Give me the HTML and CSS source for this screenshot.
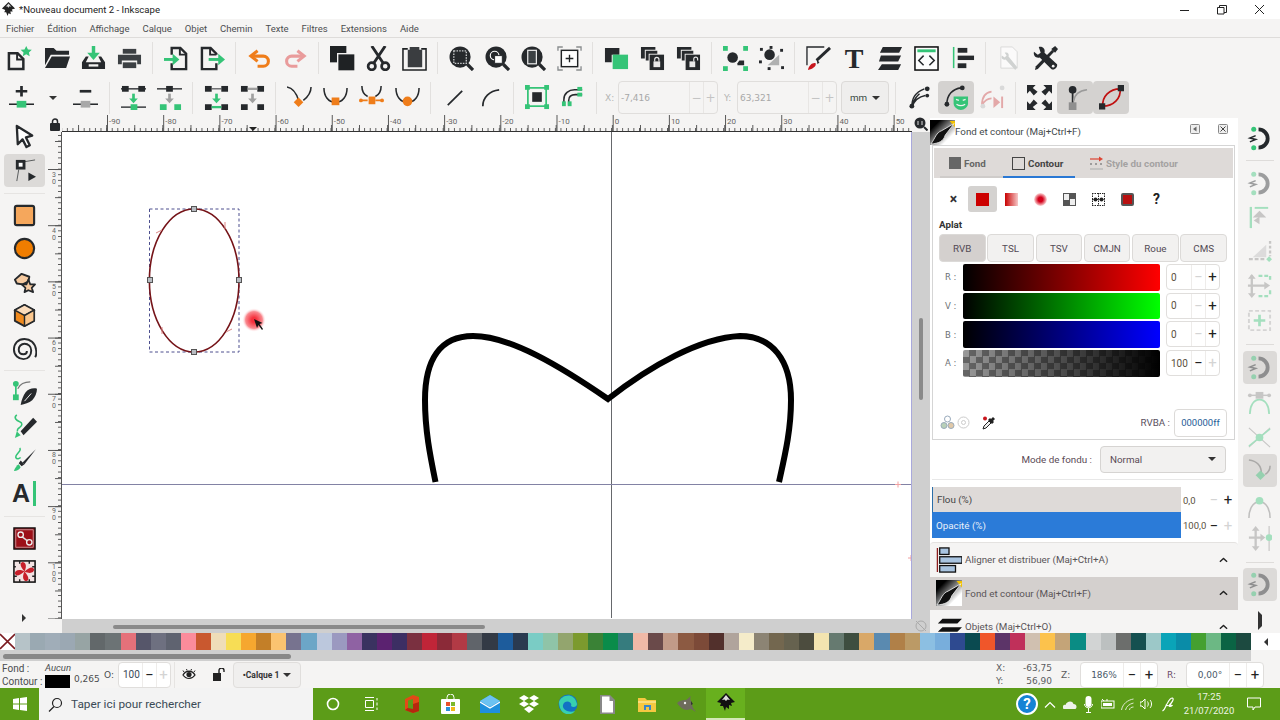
FILE: index.html
```html
<!DOCTYPE html>
<html lang="fr">
<head>
    <meta charset="UTF-8">
    <title>*Nouveau document 2 - Inkscape</title>
    <link rel="stylesheet" href="styles.css">
</head>
<body>

    <!-- Shared icons -->
    <svg class="defs" width="0" height="0">
        <defs>
            <linearGradient id="fsBg" x1="0" y1="0" x2="1" y2="1">
                <stop offset="0.2" stop-color="#000"/>
                <stop offset="0.75" stop-color="#fff"/>
            </linearGradient>
            <radialGradient id="glow">
                <stop offset="0.2" stop-color="#f5303c"/>
                <stop offset="0.7" stop-color="#f98a90"/>
                <stop offset="1" stop-color="#ffffff" stop-opacity="0"/>
            </radialGradient>
            <symbol id="magnet" viewBox="0 0 26 26">
                <path d="M12 3.5a9.5 9.5 0 0 1 0 19" fill="none" stroke="#24282b" stroke-width="4"/>
                <circle cx="7" cy="3.5" r="2.6" fill="#35c477"/>
                <circle cx="7" cy="22.5" r="2.6" fill="#35c477"/>
                <path d="M9 10 L3 12.5 L9 14 L3 16.5" fill="none" stroke="#24282b" stroke-width="1.6"/>
            </symbol>
            <symbol id="fillstroke" viewBox="0 0 28 28">
                <rect width="28" height="28" fill="url(#fsBg)"/>
                <path d="M22 1h6v7z" fill="#f2c200"/>
                <path d="M27 4 L13 12 C7 14 6 20 1 27 C10 26 15 24 17 17z" fill="#111" stroke="#fff" stroke-width=".8"/>
            </symbol>
            <symbol id="chevron" viewBox="0 0 10 6">
                <path d="M1 5 L5 1.4 L9 5" fill="none" stroke="#222" stroke-width="1.6"/>
            </symbol>
        </defs>
    </svg>

    <header class="titlebar">
        <svg class="app-logo" width="15" height="15" viewBox="0 0 16 16"><path d="M8 0 L15 7 L11.5 8 L12.5 10 L10 10 L10.5 13 L8 12 L7 15 L5.5 11 L3.5 11 L4.5 8.5 L1 7z" fill="#222"/><path d="M8 1.5 L11 5 L9 4.5 L8 6 L6.5 4.5 L5 5z" fill="#ddd"/></svg>
        <span class="title-text">*Nouveau document 2 - Inkscape</span>
        <div class="win-buttons">
            <svg width="10" height="10" viewBox="0 0 10 10"><path d="M0 5.5h9" stroke="#222" fill="none"/></svg>
            <svg width="10" height="10" viewBox="0 0 10 10"><path d="M.5 2.5h6.500v6.500H.5zM2.500 2.500V.5h7v7H7" stroke="#222" fill="none"/></svg>
            <svg width="11" height="11" viewBox="0 0 11 11"><path d="M1 1l9 9M10 1l-9 9" stroke="#222" fill="none"/></svg>
        </div>
    </header>

    <nav class="menubar">
        <span>Fichier</span><span>Édition</span><span>Affichage</span><span>Calque</span><span>Objet</span><span>Chemin</span><span>Texte</span><span>Filtres</span><span>Extensions</span><span>Aide</span>
    </nav>

    <!-- Commands toolbar -->
    <div class="toolbar commands">
        <div class="btn first"><svg class="ico" viewBox="0 0 26 26"><path d="M2 7.5h9l6 6V24H2z" fill="none" stroke="#26292c" stroke-width="2.6"/><path d="M10.5 7.5v6.5H17" fill="none" stroke="#26292c" stroke-width="2"/><polygon points="20,0 21.8,3.6 25.8,4 22.8,6.7 23.6,10.6 20,8.6 16.4,10.6 17.2,6.7 14.2,4 18.2,3.6" fill="#35c477"/></svg></div>
        <div class="btn"><svg class="ico" viewBox="0 0 26 26"><path d="M0 2h9l3 3h13v4H6L0 20z" fill="#26292c"/><path d="M7 11h19l-4 12H0z" fill="#26292c"/></svg></div>
        <div class="btn"><svg class="ico" viewBox="0 0 26 26"><path d="M13 0v8" stroke="#35c477" stroke-width="3.6" fill="none"/><path d="M6.5 7h13L13 14.5z" fill="#35c477"/><path d="M1 24v-7l4-6h3l-3 6h16l-3-6h3l4 6v7z" fill="#26292c"/><rect x="8" y="19" width="10" height="2.4" fill="#f5f4f3"/></svg></div>
        <div class="btn"><svg class="ico" viewBox="0 0 26 26"><rect x="6" y="3" width="14" height="5" fill="#3c4043"/><path d="M1 9h24v10h-4v-4H5v4H1z" fill="#3c4043"/><rect x="6" y="17" width="14" height="6" fill="#3c4043"/></svg></div>
        <div class="sep"></div>
        <div class="btn"><svg class="ico" viewBox="0 0 26 26"><path d="M8 9V2h9l6 6v16H8v-6" fill="none" stroke="#26292c" stroke-width="2.5"/><path d="M16.5 2v7H23" fill="none" stroke="#26292c" stroke-width="2"/><path d="M0 14h10" stroke="#35c477" stroke-width="3" fill="none"/><path d="M9 8l7 6-7 6z" fill="#35c477"/></svg></div>
        <div class="btn"><svg class="ico" viewBox="0 0 26 26"><path d="M17 9V8l-6-6H2v22h15v-6" fill="none" stroke="#26292c" stroke-width="2.5"/><path d="M10.5 2v7H17" fill="none" stroke="#26292c" stroke-width="2"/><path d="M9 14h11" stroke="#35c477" stroke-width="3" fill="none"/><path d="M19 8l7 6-7 6z" fill="#35c477"/></svg></div>
        <div class="sep"></div>
        <div class="btn"><svg class="ico" viewBox="0 0 26 26"><path d="M11 5 L4 10.5 L11 16" fill="none" stroke="#ef7d1a" stroke-width="3.2"/><path d="M5 10.5h12a5.2 5.2 0 0 1 0 10.5h-6" fill="none" stroke="#ef7d1a" stroke-width="3.2"/></svg></div>
        <div class="btn"><svg class="ico" viewBox="0 0 26 26"><path d="M15 5 L22 10.5 L15 16" fill="none" stroke="#e99b9b" stroke-width="3.2"/><path d="M21 10.5H9a5.2 5.2 0 0 0 0 10.500h6" fill="none" stroke="#e99b9b" stroke-width="3.2"/></svg></div>
        <div class="sep"></div>
        <div class="btn"><svg class="ico" viewBox="0 0 26 26"><rect x="0" y="0" width="17" height="17" fill="#1f2224"/><rect x="8" y="8" width="18" height="18" fill="#1f2224" stroke="#f5f4f3" stroke-width="1.4"/></svg></div>
        <div class="btn"><svg class="ico" viewBox="0 0 26 26"><circle cx="6" cy="21" r="3.8" fill="none" stroke="#26292c" stroke-width="2.8"/><circle cx="20" cy="21" r="3.8" fill="none" stroke="#26292c" stroke-width="2.8"/><path d="M8 18 L20 0M18 18 L6 0" stroke="#26292c" stroke-width="3" fill="none"/></svg></div>
        <div class="btn"><svg class="ico" viewBox="0 0 26 26"><path d="M6 3H1v22h24V3h-5" fill="none" stroke="#1f2224" stroke-width="1.6"/><path d="M8 1h10v3h3v18H6V4h2z" fill="#3a3d40"/></svg></div>
        <div class="sep"></div>
        <div class="btn"><svg class="ico" viewBox="0 0 26 26"><circle cx="11.5" cy="11.5" r="11" fill="#26292c"/><path d="M19 19l6 6" stroke="#26292c" stroke-width="3.4"/><rect x="5" y="5" width="13" height="13" fill="none" stroke="#c8cacb" stroke-width="1.4" stroke-dasharray="1.6 1.2"/></svg></div>
        <div class="btn"><svg class="ico" viewBox="0 0 26 26"><circle cx="11.5" cy="11.5" r="11" fill="#26292c"/><path d="M19 19l6 6" stroke="#26292c" stroke-width="3.4"/><circle cx="10" cy="10" r="4.5" fill="#26292c" stroke="#fff" stroke-width="1.2"/><rect x="10" y="10" width="8" height="8" fill="#fff" stroke="#26292c"/></svg></div>
        <div class="btn"><svg class="ico" viewBox="0 0 26 26"><circle cx="11.5" cy="11.5" r="11" fill="#26292c"/><path d="M19 19l6 6" stroke="#26292c" stroke-width="3.4"/><rect x="7" y="4.5" width="9" height="14" fill="#3b4043" stroke="#e8e8e8" stroke-width="1.3"/></svg></div>
        <div class="btn"><svg class="ico" viewBox="0 0 26 26"><path d="M1 5V1h5M20 1h5v4M25 21v4h-5M6 25H1v-4" fill="none" stroke="#8a8d8f" stroke-width="1.4"/><rect x="4.5" y="4.5" width="17" height="17" fill="#fdfdfd" stroke="#1f2224" stroke-width="1.5"/><path d="M13 9v8M9 13h8" stroke="#1f2224" stroke-width="1.4"/></svg></div>
        <div class="sep"></div>
        <div class="btn"><svg class="ico" viewBox="0 0 26 26"><path d="M1 2h15v7H8v8H1z" fill="#26292c"/><rect x="9" y="9" width="16" height="15" fill="#35c477"/></svg></div>
        <div class="btn"><svg class="ico" viewBox="0 0 26 26"><path d="M1 1h15v3H5v9H1z" fill="#26292c"/><path d="M6 5h12v3H9v7H6z" fill="#26292c"/><rect x="10" y="9" width="15" height="16" fill="#26292c"/><rect x="14" y="16" width="7" height="6" fill="#e9e9e9"/><path d="M15.3 16v-2a2.2 2.2 0 0 1 4.4 0v2" fill="none" stroke="#e9e9e9" stroke-width="1.2"/></svg></div>
        <div class="btn"><svg class="ico" viewBox="0 0 26 26"><path d="M1 1h15v3H5v9H1z" fill="#26292c"/><path d="M6 5h12v3H9v7H6z" fill="#26292c"/><rect x="10" y="9" width="15" height="16" fill="#26292c"/><rect x="14" y="16" width="6" height="6" fill="#e9e9e9"/><path d="M18.5 16v-2.5a2 2 0 0 1 4 0v1.5" fill="none" stroke="#e9e9e9" stroke-width="1.2"/></svg></div>
        <div class="sep"></div>
        <div class="btn"><svg class="ico" viewBox="0 0 26 26"><g fill="#35c477"><rect x="0" y="0" width="5" height="5"/><rect x="21" y="0" width="5" height="5"/><rect x="0" y="21" width="5" height="5"/><rect x="21" y="21" width="5" height="5"/></g><circle cx="10" cy="12" r="5.5" fill="#26292c"/><path d="M17 15h5v5h-7v-2z" fill="#26292c"/></svg></div>
        <div class="btn"><svg class="ico" viewBox="0 0 26 26"><g fill="#26292c"><rect x="1" y="2" width="3" height="3"/><rect x="11" y="0" width="3" height="3"/><rect x="22" y="3" width="3" height="3"/><rect x="0" y="15" width="3" height="3"/><rect x="23" y="21" width="3" height="3"/><rect x="9" y="22" width="3" height="3"/></g><circle cx="11" cy="9" r="5.5" fill="#26292c"/><path d="M21 9v11H9z" fill="#b0b1b1"/></svg></div>
        <div class="sep"></div>
        <div class="btn"><svg class="ico" viewBox="0 0 26 26"><path d="M19 1H1v19" fill="none" stroke="#26292c" stroke-width="1.4"/><path d="M25 2 L11 15" stroke="#26292c" stroke-width="3"/><path d="M11 14l3 3-2 2z" fill="#26292c"/><path d="M2 25c1-5 5-8 8-7 1 3-3 6-8 7z" fill="#c8161d"/></svg></div>
        <div class="btn"><span class="glyph-t">T</span></div>
        <div class="btn"><svg class="ico" viewBox="0 0 26 26"><path d="M5 1h20l-3 6H2zM3 10h21l-3 6H1zM4 19h20l-3 6H0z" fill="#26292c"/></svg></div>
        <div class="btn"><svg class="ico" viewBox="0 0 26 26"><rect x="1" y="1" width="24" height="24" fill="#fdfdfd" stroke="#111" stroke-width="1.6"/><rect x="3.5" y="3.5" width="19" height="3" fill="#35c477"/><path d="M10 10l-5 5 5 5M16 10l5 5-5 5" fill="none" stroke="#26292c" stroke-width="1.6"/></svg></div>
        <div class="btn"><svg class="ico" viewBox="0 0 26 26"><rect x="3" y="1" width="1.6" height="22" fill="#35c477"/><rect x="8" y="2" width="10" height="5" fill="#26292c"/><rect x="8" y="10" width="17" height="4.6" fill="#26292c"/><rect x="8" y="18" width="9" height="5" fill="#26292c"/></svg></div>
        <div class="sep"></div>
        <div class="btn faded"><svg class="ico" viewBox="0 0 26 26"><path d="M4 1h12l5 5v17H4z" fill="#fff" stroke="#c9c9c9"/><path d="M8 7c3-1 5 1 4 4l9 11-2 3-10-11c-3 1-5-1-4-4l3 2 2-2z" fill="#b8bcbc"/></svg></div>
        <div class="btn"><svg class="ico" viewBox="0 0 26 26"><path d="M2 25l3-1 17-18-2-2L3 21z" fill="#26292c"/><path d="M19 3l4-3 3 3-3 4z" fill="#26292c"/><path d="M6 1c4-1 7 2 6 6l13 12c1 3-3 7-6 5L7 12c-4 1-7-2-6-6l4 3 3-2z" fill="#26292c"/><circle cx="21" cy="21" r="1.400" fill="#f5f4f3"/></svg></div>
    </div>

    <!-- Node tool controls -->
    <div class="toolbar controls">
        <div class="btn"><svg class="ico" viewBox="0 0 26 26"><path d="M13 1v11M7 6.5h12" stroke="#26292c" stroke-width="2.8" fill="none"/><path d="M0 20h26" stroke="#26292c" stroke-width="1.6"/><rect x="8" y="16.5" width="10" height="7" fill="#35c477"/></svg></div>
        <div class="btn narrow"><span class="caret"></span></div>
        <div class="btn"><svg class="ico" viewBox="0 0 26 26"><path d="M7 6.5h12" stroke="#26292c" stroke-width="2.8" fill="none"/><path d="M0 20h26" stroke="#26292c" stroke-width="1.6"/><rect x="8" y="16.5" width="10" height="7" fill="#a8a8a8"/></svg></div>
        <div class="sep wide"></div>
        <div class="btn"><svg class="ico" viewBox="0 0 26 26"><path d="M0 4h26" stroke="#26292c" stroke-width="1.4"/><rect x="1" y="1" width="7" height="6" fill="#26292c"/><rect x="18" y="1" width="7" height="6" fill="#26292c"/><path d="M13 9v7" stroke="#35c477" stroke-width="2.8"/><path d="M8.5 14h9L13 19z" fill="#35c477"/><path d="M0 23h26" stroke="#26292c" stroke-width="1.4"/><rect x="10" y="20" width="7" height="6" fill="#35c477"/></svg></div>
        <div class="btn"><svg class="ico" viewBox="0 0 26 26"><path d="M0 4h26" stroke="#26292c" stroke-width="1.4"/><rect x="9.500" y="1" width="7" height="6" fill="#26292c"/><path d="M13 9v7" stroke="#a0a0a0" stroke-width="2.8"/><path d="M8.500 14h9L13 19z" fill="#a0a0a0"/><rect x="3" y="20" width="7" height="6" fill="#35c477"/><rect x="18" y="20" width="7" height="6" fill="#35c477"/></svg></div>
        <div class="sep"></div>
        <div class="btn"><svg class="ico" viewBox="0 0 26 26"><rect x="1" y="1" width="7" height="6" fill="#26292c"/><rect x="18" y="1" width="7" height="6" fill="#26292c"/><path d="M8 4h10" stroke="#26292c"/><path d="M13 9v7" stroke="#35c477" stroke-width="2.800"/><path d="M8.500 14h9L13 19z" fill="#35c477"/><rect x="1" y="20" width="7" height="6" fill="#26292c"/><rect x="18" y="20" width="7" height="6" fill="#26292c"/><path d="M8 23h10" stroke="#35c477" stroke-width="2.400"/></svg></div>
        <div class="btn"><svg class="ico" viewBox="0 0 26 26"><rect x="1" y="1" width="7" height="6" fill="#26292c"/><rect x="18" y="1" width="7" height="6" fill="#26292c"/><path d="M8 4h10" stroke="#a0a0a0" stroke-width="2.400"/><path d="M13 9v7" stroke="#a0a0a0" stroke-width="2.800"/><path d="M8.500 14h9L13 19z" fill="#a0a0a0"/><rect x="1" y="20" width="7" height="6" fill="#26292c"/><rect x="18" y="20" width="7" height="6" fill="#26292c"/></svg></div>
        <div class="sep"></div>
        <div class="btn"><svg class="ico" viewBox="0 0 26 26"><path d="M0 2c6 1 10 7 12 14M25 2c0 5-3 10-8 14" fill="none" stroke="#26292c" stroke-width="1.600"/><path d="M12 13l5 5-5 5-5-5z" fill="#ef7d1a"/></svg></div>
        <div class="btn"><svg class="ico" viewBox="0 0 26 26"><path d="M1 3c0 8 4 15 12 15s12-7 12-15" fill="none" stroke="#26292c" stroke-width="1.600"/><rect x="9" y="13" width="8" height="8" fill="#ef7d1a"/></svg></div>
        <div class="btn"><svg class="ico" viewBox="0 0 26 26"><path d="M3 1c0 5 2 9 6 11M23 1c0 5-2 9-6 11" fill="none" stroke="#26292c" stroke-width="1.600"/><rect x="10" y="12" width="7" height="8" fill="#ef7d1a"/><path d="M1 16h8M17 16h8" stroke="#ef7d1a" stroke-width="1.600"/><circle cx="2" cy="16" r="2" fill="#ef7d1a"/><circle cx="24" cy="16" r="2" fill="#ef7d1a"/></svg></div>
        <div class="btn"><svg class="ico" viewBox="0 0 26 26"><path d="M1 3c0 8 4 15 12 15s12-7 12-15" fill="none" stroke="#26292c" stroke-width="1.600"/><circle cx="13" cy="17" r="5" fill="#ef7d1a"/></svg></div>
        <div class="sep"></div>
        <div class="btn"><svg class="ico" viewBox="0 0 26 26"><path d="M6 21 L21 6" stroke="#26292c" stroke-width="1.800"/></svg></div>
        <div class="btn"><svg class="ico" viewBox="0 0 26 26"><path d="M5 22c0-9 7-16 17-17" fill="none" stroke="#26292c" stroke-width="1.800"/></svg></div>
        <div class="sep"></div>
        <div class="btn"><svg class="ico" viewBox="0 0 26 26"><rect x="3" y="3" width="19" height="19" fill="none" stroke="#35c477" stroke-width="1.800"/><g fill="#35c477"><rect x="0" y="0" width="5" height="5"/><rect x="20" y="0" width="5" height="5"/><rect x="0" y="20" width="5" height="5"/><rect x="20" y="20" width="5" height="5"/></g><rect x="7.500" y="7.500" width="10" height="10" fill="#26292c"/></svg></div>
        <div class="btn"><svg class="ico" viewBox="0 0 26 26"><path d="M3 21v-6c0-6 5-10 11-10h8M8 21v-5c0-4 3-6 7-6h7" fill="none" stroke="#26292c" stroke-width="1.600"/><g fill="#35c477"><rect x="1" y="17" width="4" height="5"/><rect x="7" y="17" width="4" height="5"/><rect x="17" y="2" width="5" height="4"/><rect x="17" y="8" width="5" height="4"/></g></svg></div>
        <div class="sep"></div>
        <label class="field-label">X:</label>
        <div class="coord"><span>-7,416</span><i>−</i><i>+</i></div>
        <label class="field-label">Y:</label>
        <div class="coord"><span>63,321</span><i>−</i><i>+</i></div>
        <div class="unit">mm<span class="caret"></span></div>
        <div class="sep end"></div>
        <div class="btn"><svg class="ico" viewBox="0 0 26 26"><path d="M4 23c0-9 3-15 13-19M4 23c3-8 8-11 14-12M4 23c2-9 6-12 8-14" fill="none" stroke="#26292c" stroke-width="1.500"/><circle cx="4" cy="22" r="2.500" fill="#26292c"/><circle cx="20" cy="4" r="2.500" fill="#26292c"/><circle cx="20" cy="11" r="2" fill="#26292c"/></svg></div>
        <div class="btn on"><svg class="ico" viewBox="0 0 26 26"><path d="M3 20C3 10 9 4 18 3" fill="none" stroke="#26292c" stroke-width="1.600"/><circle cx="3" cy="20" r="2.500" fill="#26292c"/><circle cx="19" cy="3" r="2.500" fill="#26292c"/><path d="M10 12h15v7c0 4-4 7-7.500 7S10 23 10 19z" fill="#35c477"/><path d="M12.500 15l3 1M22.500 15l-3 1M13 20c3 2 6 2 9 0" stroke="#f0f0f0" stroke-width="1.400" fill="none"/></svg></div>
        <div class="btn faded-red"><svg class="ico" viewBox="0 0 26 26"><path d="M2 21c0-7 3-13 10-14M2 21c3-5 6-7 10-7" fill="none" stroke="#e3a8a8" stroke-width="1.800"/><circle cx="3" cy="22" r="2.500" fill="#d9d9d9"/><circle cx="23" cy="3" r="2.500" fill="#d9d9d9"/><path d="M14 12l7 6-7 6z" fill="#e3a8a8"/><rect x="22" y="12" width="2" height="12" fill="#e3a8a8"/></svg></div>
        <div class="sep"></div>
        <div class="btn"><svg class="ico" viewBox="0 0 26 26"><g fill="#26292c"><path d="M0 0h9L6 3l5 4-4 4-4-5-3 3z"/><path d="M26 0h-9l3 3-5 4 4 4 4-5 3 3z"/><path d="M0 26h9l-3-3 5-4-4-4-4 5-3-3z"/><path d="M26 26h-9l3-3-5-4 4-4 4 5 3-3z"/></g></svg></div>
        <div class="btn on"><svg class="ico" viewBox="0 0 26 26"><path d="M10 4v15" stroke="#26292c" stroke-width="1.800"/><circle cx="10" cy="5" r="4" fill="#26292c"/><rect x="6" y="18" width="8" height="8" fill="#8f8f8f"/><path d="M11 17c1-8 6-11 14-12" fill="none" stroke="#9a9a9a" stroke-width="1.500"/></svg></div>
        <div class="btn on"><svg class="ico" viewBox="0 0 26 26"><path d="M4 22C3 12 11 4 22 4M4 22c11 0 19-8 18-18" fill="none" stroke="#c01010" stroke-width="1.800"/><rect x="0" y="19" width="6.500" height="6.500" fill="#26292c"/><rect x="19.500" y="0" width="6.500" height="6.500" fill="#26292c"/></svg></div>
    </div>

    <main class="workspace">
        <!-- Left tool column -->
        <aside class="toolbox">
            <div class="tool"><svg class="ico" viewBox="0 0 26 26"><path d="M5 2 L21 12 L14.500 14 L18.500 22 L15 24 L11 16 L6 21z" fill="#fff" stroke="#26292c" stroke-width="2.400" stroke-linejoin="round"/></svg></div>
            <div class="tool on"><svg class="ico" viewBox="0 0 26 26"><path d="M5 24 L7 12M12 4l12-2" stroke="#55585a" fill="none"/><rect x="5.500" y="3.500" width="7" height="7" fill="#fff" stroke="#26292c" stroke-width="3"/><path d="M17 15l8 4.500-8 4.500z" fill="#26292c"/></svg></div>
            <div class="tool-sep"></div>
            <div class="tool"><svg class="ico" viewBox="0 0 26 26"><rect x="3" y="3" width="20" height="20" rx="2" fill="#f5a75c" stroke="#26292c" stroke-width="2.200"/></svg></div>
            <div class="tool"><svg class="ico" viewBox="0 0 26 26"><circle cx="13" cy="13" r="10" fill="#f07d00" stroke="#26292c" stroke-width="2.200"/></svg></div>
            <div class="tool"><svg class="ico" viewBox="0 0 26 26"><path d="M3 10l7-6 8 3-1 5-6 3-6-1z" fill="#f6caa0" stroke="#26292c" stroke-width="2" stroke-linejoin="round"/><polygon points="17,10 19,15 24,15 20.500,18.500 22,23 17,21 13,23 14,18.500 10,15 15,15" fill="#f6caa0" stroke="#26292c" stroke-width="1.800" stroke-linejoin="round"/></svg></div>
            <div class="tool"><svg class="ico" viewBox="0 0 26 26"><path d="M13 2l10 5.500v11L13 24 3 18.500v-11z" fill="#f08a1e" stroke="#26292c" stroke-width="2" stroke-linejoin="round"/><path d="M13 2l10 5.500L13 13 3 7.500z" fill="#fbdcbc" stroke="#26292c" stroke-width="1.500"/><path d="M13 13l10-5.500v11L13 24z" fill="#fbc78e" stroke="#26292c" stroke-width="1.500"/></svg></div>
            <div class="tool"><svg class="ico" viewBox="0 0 26 26"><path d="M24 21c1.500-2 1.500-5 1-8C24 6 19 2 13 2 6 2 2 7 2 13c0 6 5 10 10 10 5 0 8-4 8-9 0-4-3-7-7-7-3.500 0-6 3-6 6 0 3 2 5 5 5 2 0 3.500-1.500 3.500-3.500" fill="none" stroke="#26292c" stroke-width="2"/></svg></div>
            <div class="tool-sep tall"></div>
            <div class="tool"><svg class="ico" viewBox="0 0 26 26"><path d="M4 5v13" stroke="#35c477" stroke-width="1.800"/><circle cx="4" cy="4" r="3" fill="#35c477"/><rect x="1" y="15" width="6" height="6" fill="#35c477"/><path d="M6 9c2-4 6-7 13-7" fill="none" stroke="#777" stroke-width="1.200"/><path d="M26 9c-4-1-9 0-12 4-2 3-4 7-5 13 4-1 9-2 12-5 3-3 5-8 5-12z" fill="#26292c"/><path d="M20 14l-7 8" stroke="#f5f4f3"/></svg></div>
            <div class="tool"><svg class="ico" viewBox="0 0 26 26"><path d="M5 1c-4 3 0 6 3 7s3 4 0 6c-2 1-3 3-2 4" fill="none" stroke="#35c477" stroke-width="1.600"/><path d="M3 25l2-7 4 4z" fill="#35c477"/><path d="M9 18L22 4l4 4-14 14z" fill="#26292c"/></svg></div>
            <div class="tool"><svg class="ico" viewBox="0 0 26 26"><path d="M8 1c3 3-5 6-4 10 1 2 4 1 5 0" fill="none" stroke="#35c477" stroke-width="1.600"/><path d="M25 2L11 16l2 2z" fill="#26292c"/><path d="M9 14l4 4-3 2-3-3z" fill="#26292c"/><path d="M2 25c1-3 3-6 5-7l2 3c-1 2-4 4-7 4z" fill="#35c477"/></svg></div>
            <div class="tool"><span class="glyph-a">A</span><span class="text-cursor"></span></div>
            <div class="tool-sep"></div>
            <div class="tool"><svg class="ico" viewBox="0 0 26 26"><rect x="2" y="2" width="22" height="22" fill="#9c0f18" stroke="#111" stroke-width="1.400"/><rect x="4" y="4" width="18" height="18" fill="none" stroke="#ddd" stroke-width=".6"/><path d="M9 10l9 7" stroke="#ddd" stroke-width="1.400"/><circle cx="9" cy="9" r="2.800" fill="#9c0f18" stroke="#eee" stroke-width="1.400"/><circle cx="18" cy="17" r="2.800" fill="#9c0f18" stroke="#eee" stroke-width="1.400"/></svg></div>
            <div class="tool"><svg class="ico" viewBox="0 0 26 26"><rect x="2" y="2" width="22" height="22" fill="#f2e3e3" stroke="#111" stroke-width="1.600"/><path d="M13 13C8 7 8 4 11 3c3 0 5 4 2 10zM13 13c6-5 9-5 10-2 0 3-4 5-10 2zM13 13c5 6 5 9 2 10-3 0-5-4-2-10zM13 13c-6 5-9 5-10 2 0-3 4-5 10-2z" fill="#c71f2a"/><path d="M2 8h2M8 2v3M24 8h-3M18 2v3M2 18h3M8 24v-3M24 18h-3M18 24v-3" stroke="#222" stroke-width="1.500"/></svg></div>
            <div class="tool more"><span class="arrow-right"></span></div>
        </aside>

        <!-- Rulers, canvas, scrollbars -->
        <section class="editor">
            <div class="ruler-row">
                <div class="ruler-corner"><svg width="10" height="13" viewBox="0 0 10 13"><rect y="5" width="10" height="8" rx="1" fill="#26292c"/><path d="M2.500 5.500V3.500a2.500 2.500 0 0 1 5 0v2" fill="none" stroke="#26292c" stroke-width="1.500"/></svg></div>
                <div class="ruler-top">
                    <span>-90</span><span>-80</span><span>-70</span><span>-60</span><span>-50</span><span>-40</span><span>-30</span><span>-20</span><span>-10</span><span>0</span><span>10</span><span>20</span><span>30</span><span>40</span><span>50</span>
                    <i class="ruler-mark"></i>
                </div>
                <div class="zoom-corner"><svg width="14" height="14" viewBox="0 0 14 14"><circle cx="6" cy="6" r="5.500" fill="#26292c"/><path d="M10 10l3.500 3.500" stroke="#26292c" stroke-width="2"/><path d="M4 4v4M8 4v4" stroke="#ddd"/></svg></div>
            </div>
            <div class="canvas-row">
                <div class="ruler-left">
                    <span>3<br>0</span><span>4<br>0</span><span>5<br>0</span><span>6<br>0</span><span>7<br>0</span><span>8<br>0</span><span>9<br>0</span><span>1<br>0<br>0</span>
                </div>
                <div class="canvas">
                    <svg class="drawing" width="849" height="486" viewBox="62 132 849 486">
                        <path d="M611.500 132V618" stroke="#66686c" fill="none"/>
                        <path d="M62 484.500H911" stroke="#8282a4" fill="none"/>
                        <path d="M895 484.500h6M898 481.500v6M908 558h6M911 555v6" stroke="#f0a0a0" fill="none"/>
                        <path d="M435.500 482C430 455 425 430 425 400C425 360 440 336 473 336C510 336 560 366 608 399C650 366 700 338 740 336C772 336 791 360 791 400C791 430 785 455 779 482" fill="none" stroke="#000" stroke-width="6"/>
                        <rect x="149.500" y="209" width="89.500" height="143" fill="none" stroke="#4c4f8e" stroke-dasharray="3 2.500"/>
                        <ellipse cx="194.200" cy="280.500" rx="44.800" ry="71.500" fill="none" stroke="#751318" stroke-width="1.600"/>
                        <path d="M156 233l6-3M225 222v7M162 334v-7M226 332l6-3" stroke="#d88" fill="none"/>
                        <g fill="#b9bcc2" stroke="#555">
                            <rect x="191.500" y="206.500" width="5" height="5"/>
                            <rect x="147.500" y="277.500" width="5" height="5"/>
                            <rect x="236.500" y="277.500" width="5" height="5"/>
                            <rect x="191.500" y="349.500" width="5" height="5"/>
                        </g>
                        <circle cx="254" cy="320" r="12" fill="url(#glow)"/>
                        <path d="M254 319l3 9 1.500-3 3.500 5 1-1-3.500-5 3-1z" fill="#111"/>
                    </svg>
                </div>
                <div class="vscroll"><span class="vthumb"></span></div>
            </div>
            <div class="hscroll-row">
                <div class="hscroll"><span class="hthumb"></span></div>
                <div class="cms-corner"><svg width="12" height="12" viewBox="0 0 12 12"><circle cx="6" cy="6" r="5" fill="none" stroke="#aaa"/><path d="M1 1l10 10" stroke="#aaa"/></svg></div>
            </div>
        </section>

        <!-- Dock -->
        <aside class="dock">
            <div class="dock-head">
                <svg class="dock-icon" viewBox="0 0 28 28"><use href="#fillstroke"/></svg>
                <span class="dock-title">Fond et contour (Maj+Ctrl+F)</span>
                <svg class="mini first-mini" width="10" height="10" viewBox="0 0 10 10"><rect x=".5" y=".5" width="9" height="9" rx="1" fill="#eee" stroke="#888"/><path d="M6.500 2.500v5L3 5z" fill="#666"/></svg>
                <svg class="mini" width="10" height="10" viewBox="0 0 10 10"><rect x=".5" y=".5" width="9" height="9" rx="1" fill="#eee" stroke="#888"/><path d="M2.500 2.500l5 5M7.500 2.500l-5 5" stroke="#444"/></svg>
            </div>
            <div class="fs-panel">
                <div class="fs-tabs">
                    <div class="fs-tab tab-fill"><span class="sq-solid"></span>Fond</div>
                    <div class="fs-tab tab-stroke"><span class="sq-line"></span>Contour</div>
                    <div class="fs-tab tab-style"><svg width="13" height="14" viewBox="0 0 13 14"><path d="M0 3h10" stroke="#d43" stroke-width="1.200"/><path d="M9 0.500l4 2.500-4 2.500z" fill="#d43"/><path d="M0 8h2M5 8h2M10 8h2" stroke="#888" stroke-width="1.400"/><path d="M0 13h13" stroke="#bbb" stroke-width="1.500"/></svg>Style du contour</div>
                </div>
                <div class="paint-modes">
                    <div class="mode">×</div>
                    <div class="mode on"><span class="pm pm-flat"></span></div>
                    <div class="mode"><span class="pm pm-linear"></span></div>
                    <div class="mode"><span class="pm pm-radial"></span></div>
                    <div class="mode"><span class="pm pm-pattern"></span></div>
                    <div class="mode"><svg width="13" height="13" viewBox="0 0 13 13"><path d="M0 .5h13M0 6.500h13M0 12.500h13M.5 0v13M6.500 0v13M12.500 0v13" stroke="#222" stroke-dasharray="1.500 1"/><circle cx="3.500" cy="6.500" r="2" fill="#222"/><circle cx="9.500" cy="6.500" r="2" fill="#222"/></svg></div>
                    <div class="mode"><span class="pm pm-swatch"></span></div>
                    <div class="mode mode-help">?</div>
                </div>
                <div class="aplat">Aplat</div>
                <div class="color-tabs">
                    <span class="on">RVB</span><span>TSL</span><span>TSV</span><span>CMJN</span><span>Roue</span><span>CMS</span>
                </div>
                <div class="sliders">
                    <label>R :</label><div class="bar bar-r"></div>
                    <div class="spin"><b>0</b><i class="dim">−</i><i>+</i></div>
                    <label>V :</label><div class="bar bar-g"></div>
                    <div class="spin"><b>0</b><i class="dim">−</i><i>+</i></div>
                    <label>B :</label><div class="bar bar-b"></div>
                    <div class="spin"><b>0</b><i class="dim">−</i><i>+</i></div>
                    <label>A :</label><div class="bar bar-a"></div>
                    <div class="spin"><b>100</b><i>−</i><i class="dim">+</i></div>
                </div>
                <div class="rgba-row">
                    <svg width="15" height="15" viewBox="0 0 15 15"><circle cx="7.500" cy="4" r="3" fill="none" stroke="#9ab"/><circle cx="4" cy="10.500" r="3" fill="#b8d0b8" stroke="#9ab"/><circle cx="11" cy="10.500" r="3" fill="#e0c8a8" stroke="#9ab"/></svg>
                    <svg width="13" height="13" viewBox="0 0 13 13"><circle cx="6.500" cy="6.500" r="5.500" fill="none" stroke="#ccc"/><circle cx="6.500" cy="6.500" r="2" fill="none" stroke="#ccc"/></svg>
                    <svg class="picker" width="13" height="14" viewBox="0 0 13 14"><circle cx="3" cy="2.500" r="2" fill="#c8161d"/><path d="M1 13l1-3 5-5 2 2-5 5z" fill="#eee" stroke="#222"/><path d="M6 4l2-2 1 1 2-2 2 2-2 2 1 1-2 2z" fill="#222"/></svg>
                    <span class="rgba-label">RVBA :</span>
                    <span class="rgba-input">000000ff</span>
                </div>
            </div>
            <div class="blend-row">
                <span>Mode de fondu :</span>
                <div class="select">Normal<span class="caret"></span></div>
            </div>
            <div class="scale-row flou"><div class="scale"><span>Flou (%)</span></div><b>0,0</b><i class="dim">−</i><i>+</i></div>
            <div class="scale-row opac"><div class="scale"><span>Opacité (%)</span></div><b>100,0</b><i>−</i><i class="dim">+</i></div>
            <div class="dock-items">
                <div class="dock-item">
                    <svg class="item-icon" viewBox="0 0 28 28"><path d="M1.500 1v26" stroke="#8c1c1c" stroke-width="1.400"/><rect x="4" y="1" width="10" height="7" fill="#a9c4e0" stroke="#111" stroke-width="1.400"/><rect x="4" y="10.500" width="24" height="7" fill="#a9c4e0" stroke="#111" stroke-width="1.400"/><rect x="4" y="20" width="17" height="7" fill="#a9c4e0" stroke="#111" stroke-width="1.400"/></svg>
                    <span>Aligner et distribuer (Maj+Ctrl+A)</span>
                    <svg class="chev" viewBox="0 0 10 6"><use href="#chevron"/></svg>
                </div>
                <div class="dock-item on">
                    <svg class="item-icon" viewBox="0 0 28 28"><use href="#fillstroke"/></svg>
                    <span>Fond et contour (Maj+Ctrl+F)</span>
                    <svg class="chev" viewBox="0 0 10 6"><use href="#chevron"/></svg>
                </div>
                <div class="dock-item last">
                    <svg class="item-icon" viewBox="0 0 28 28"><path d="M7 3h21l-5 5H2zM7 12h21l-5 5H2z" fill="#111"/></svg>
                    <span>Objets (Maj+Ctrl+O)</span>
                    <svg class="chev" viewBox="0 0 10 6"><use href="#chevron"/></svg>
                </div>
            </div>
        </aside>

        <!-- Snap bar -->
        <aside class="snapbar">
            <div class="snap main"><svg width="26" height="26"><use href="#magnet"/></svg></div>
            <div class="snap-sep first"></div>
            <div class="snap group faint"><svg width="26" height="26"><use href="#magnet"/></svg></div>
            <div class="snap group faint"><svg width="26" height="26" viewBox="0 0 26 26"><path d="M4 2v22" stroke="#35c477" stroke-width="2.400"/><path d="M7 16l6-4v8z" fill="#888"/><path d="M13 6l7 7H6z" fill="#888"/><path d="M8 3h14" stroke="#35c477" stroke-width="2"/></svg></div>
            <div class="snap group faint"><svg width="26" height="26" viewBox="0 0 26 26"><path d="M24 2v16" stroke="#888" stroke-width="2.400" stroke-dasharray="3 2"/><path d="M2 21h18" stroke="#888" stroke-width="2.400" stroke-dasharray="4 2"/><path d="M20 6L6 19h14z" fill="#bbb"/><path d="M23 18l3 3-3 3-3-3z" fill="#35c477"/></svg></div>
            <div class="snap group faint"><svg width="26" height="26" viewBox="0 0 26 26"><path d="M5 1v22M1 12h18" stroke="#888" stroke-width="2.400"/><path d="M5 0l4 5H1zM5 25l4-5H1zM24 12l-6 4V8z" fill="#888"/><path d="M12 2h12M12 23h12M24 2v5M24 17v6" stroke="#35c477" stroke-width="2.400" stroke-dasharray="4 2"/></svg></div>
            <div class="snap group faint"><svg width="26" height="26" viewBox="0 0 26 26"><rect x="2" y="3" width="22" height="20" fill="none" stroke="#aaa" stroke-width="2" stroke-dasharray="4 2.500"/><path d="M13 7v12M7 13h12" stroke="#35c477" stroke-width="2.800"/></svg></div>
            <div class="snap-sep second"></div>
            <div class="snap on faint"><svg width="26" height="26"><use href="#magnet"/></svg></div>
            <div class="snap faint after-on"><svg width="26" height="26" viewBox="0 0 26 26"><path d="M3 24c0-9 4-15 10-15s10 6 10 15" fill="none" stroke="#35c477" stroke-width="1.800"/><rect x="9" y="1" width="8" height="7" fill="#888"/><path d="M2 4.500h22" stroke="#888" stroke-width="1.500"/><circle cx="3" cy="4.500" r="2" fill="#888"/><circle cx="23" cy="4.500" r="2" fill="#888"/></svg></div>
            <div class="snap faint"><svg width="26" height="26" viewBox="0 0 26 26"><path d="M2 23L24 3M2 3l22 20" stroke="#888" stroke-width="1.200"/><path d="M2 22L24 4" stroke="#35c477" stroke-width="1.500"/><circle cx="13" cy="13" r="4" fill="#35c477"/></svg></div>
            <div class="snap on faint"><svg width="26" height="26" viewBox="0 0 26 26"><path d="M2 2c8 1 13 6 13 14M24 8c0 4-2 7-5 9" fill="none" stroke="#666" stroke-width="1.600"/><path d="M14 13l5 5-5 5-5-5z" fill="#35c477"/></svg></div>
            <div class="snap faint after-on wider"><svg width="26" height="26" viewBox="0 0 26 26"><path d="M2 24c0-9 4-17 11-17s11 8 11 17" fill="none" stroke="#777" stroke-width="1.600"/><circle cx="13" cy="6" r="4" fill="#35c477"/></svg></div>
            <div class="snap faint tight"><svg width="26" height="26" viewBox="0 0 26 26"><path d="M9 2v22M2 12h14" stroke="#888" stroke-width="2.400"/><path d="M9 0l4 5H5zM9 26l4-5H5zM19 12l-5 4V8z" fill="#888"/><path d="M23 0v26" stroke="#888" stroke-width="1.200"/><circle cx="23" cy="12" r="3.500" fill="#35c477"/></svg></div>
            <div class="snap-sep third"></div>
            <div class="snap on faint"><svg width="26" height="26"><use href="#magnet"/></svg></div>
            <div class="snap-more"><span class="arrow-right"></span></div>
        </aside>
    </main>

    <div class="palette-row">
        <svg class="no-color" width="15" height="17" viewBox="0 0 15 17"><path d="M0 1l15 15M15 1L0 16" stroke="#7a1a20" stroke-width="1.600"/></svg>
        <div class="palette" id="palette"></div>
        <div class="palette-end"><span class="arrow-left"></span></div>
    </div>
    <div class="palette-scroll"><span></span></div>

    <footer class="statusbar">
        <div class="style-labels"><span>Fond :</span><span>Contour :</span></div>
        <div class="style-values"><em>Aucun</em><span class="stroke-swatch"></span></div>
        <span class="stroke-width">0,265</span>
        <label class="o-label">O:</label>
        <div class="spin small"><b>100</b><i>−</i><i class="dim">+</i></div>
        <div class="st-sep"></div>
        <svg class="eye" width="14" height="11" viewBox="0 0 14 11"><path d="M1 6c3-5 9-5 12 0-3 4.500-9 4.500-12 0z" fill="#fff" stroke="#222" stroke-width="1.300"/><circle cx="7" cy="5.500" r="2.600" fill="#222"/><path d="M2 3L1 1.500M5 1.500L4.500 0M9 1.500L9.500 0M12 3l1-1.500" stroke="#222"/></svg>
        <svg class="open-lock" width="12" height="13" viewBox="0 0 12 13"><rect y="5" width="8" height="8" fill="#222"/><path d="M6 5V2.500a2.500 2.500 0 0 1 5 0V4" fill="none" stroke="#222" stroke-width="1.400"/></svg>
        <div class="layer">•Calque 1<span class="caret"></span></div>
        <div class="coords">
            <span>X:</span><span class="cv">-63,75</span>
            <span>Y:</span><span class="cv">56,90</span>
        </div>
        <label class="z-label">Z:</label>
        <div class="spin zoomfield"><b>186%</b><i>−</i><i>+</i></div>
        <label class="r-label">R:</label>
        <div class="spin rotfield"><b>0,00°</b><i>−</i><i>+</i></div>
    </footer>

    <footer class="taskbar">
        <div class="start"><svg width="14" height="14" viewBox="0 0 14 14"><path d="M0 2l6-1v5.500H0zM7 1l7-1v6.500H7zM0 7.500h6V13l-6-1zM7 7.500h7V14l-7-1z" fill="#fff"/></svg></div>
        <div class="search">
            <svg width="15" height="15" viewBox="0 0 15 15"><circle cx="9" cy="6" r="4.500" fill="none" stroke="#222" stroke-width="1.200"/><path d="M6 9.500L1 14.500" stroke="#222" stroke-width="1.300"/></svg>
            <span>Taper ici pour rechercher</span>
        </div>
        <div class="task"><svg width="14" height="14" viewBox="0 0 14 14"><circle cx="7" cy="7" r="5.500" fill="none" stroke="#fff" stroke-width="1.600"/></svg></div>
        <div class="task"><svg width="15" height="14" viewBox="0 0 15 14"><path d="M1 .5h9M1 13.500h9M1.500 3.500h8v7h-8zM13 1v2.500M13 5.500v3M13 10.500V13" fill="none" stroke="#fff"/></svg></div>
        <div class="task"><svg width="15" height="18" viewBox="0 0 15 18"><path d="M9 0l6 2v14l-6 2-8-3V4z" fill="#e24a17"/><path d="M9 9l6-2v9l-6 2-8-3z" fill="#b5280e"/><path d="M4 5.500l5-1.500v10l-5-1z" fill="#5c9c18"/></svg></div>
        <div class="task"><svg width="19" height="20" viewBox="0 0 19 20"><path d="M6 5V3.500a3.500 3.500 0 0 1 7 0V5" fill="none" stroke="#fff"/><rect y="5" width="19" height="15" rx="1" fill="#fff"/><rect x="5" y="8" width="4" height="4" fill="#e8502a"/><rect x="10" y="8" width="4" height="4" fill="#7cb82a"/><rect x="5" y="13" width="4" height="4" fill="#2a90d8"/><rect x="10" y="13" width="4" height="4" fill="#f2b81a"/></svg></div>
        <div class="task"><svg width="20" height="18" viewBox="0 0 20 18"><path d="M0 6l10-6 10 6v12H0z" fill="#1f8fdc"/><path d="M0 6l10 6 10-6-10-6z" fill="#6cc2f2"/><path d="M0 7l10 6 10-6" fill="none" stroke="#fff" stroke-width="1.200"/></svg></div>
        <div class="task"><svg width="20" height="18" viewBox="0 0 20 18"><path d="M5 0l5 3-5 3-5-3zM15 0l5 3-5 3-5-3zM5 6l5 3-5 3-5-3zM15 6l5 3-5 3-5-3zM10 11l5 3-5 4-5-4z" fill="#fff"/></svg></div>
        <div class="task"><svg width="20" height="20" viewBox="0 0 20 20"><circle cx="10" cy="10" r="9.500" fill="#1272c4"/><path d="M1 8c2-7 15-11 18 2 0 3-4 4-6 2 2-4-6-7-8-1-1 5 6 8 12 6-3 4-8 4-11 2C3 17 1 13 1 8z" fill="#38d0b0"/></svg></div>
        <div class="task"><svg width="15" height="19" viewBox="0 0 15 19"><path d="M0 0h10l5 5v14H0z" fill="#888"/><path d="M2 1.500h7.500V6H13v11.500H2z" fill="#fff"/></svg></div>
        <div class="task"><svg width="18" height="15" viewBox="0 0 18 15"><path d="M0 1h7l2 2h9v12H0z" fill="#f5c842"/><path d="M0 4h18v2H0z" fill="#f9dd7c"/><rect x="6" y="8" width="7" height="5" fill="#3a86c8"/><rect x="8" y="10" width="3" height="3" fill="#f5c842"/></svg></div>
        <div class="task"><svg width="19" height="16" viewBox="0 0 19 16"><path d="M0 7c3-3 6-3 9-3 2-1 3-3 5-4-1 2-1 3 0 5l2 7 3 4-5-3-4 1c-4 0-7-3-10-7z" fill="#6e6c5c"/><circle cx="8" cy="7" r="1.200" fill="#eee"/><path d="M14 5l2 3-2 1z" fill="#333"/></svg></div>
        <div class="task current"><svg width="18" height="20" viewBox="0 0 18 20"><path d="M9 0l9 9-4 1 1 3-3-1 0 4-3-2-1 4-2-5H3l1-3-4-1z" fill="#111"/><path d="M9 2l4 5-2.500-.5L9 8 7.500 6.500 5 7z" fill="#ddd"/></svg></div>
        <div class="tray">
            <div class="help">?</div>
            <svg class="t20" width="11" height="7" viewBox="0 0 11 7"><path d="M.5 6.500l5-5 5 5" fill="none" stroke="#fff" stroke-width="1.200"/></svg>
            <svg class="t19" width="14" height="9" viewBox="0 0 14 9"><path d="M1 9C-1 7 1 4 3 5c1-4 7-5 8-1 3 0 4 3 2 5z" fill="#eef2ea"/></svg>
            <svg class="t19" width="9" height="17" viewBox="0 0 9 17"><rect x="1.500" width="6" height="11" rx="3" fill="#fff"/><path d="M.5 8c0 5 8 5 8 0M4.500 12v4M2 16.500h5" fill="none" stroke="#fff"/></svg>
            <svg class="t20" width="14" height="10" viewBox="0 0 14 10"><rect x="0" y="2" width="13" height="7" fill="none" stroke="#fff"/><rect x="2" y="4" width="9" height="3" fill="#fff"/><path d="M1 0l2 2M6 0v2" stroke="#fff"/></svg>
            <svg class="t19" width="14" height="13" viewBox="0 0 14 13"><path d="M1 12C2 6 7 2 13 1M5 12c1-4 4-6 8-7M9 12c0-2 2-3 4-3" fill="none" stroke="#dfe8d0"/></svg>
            <svg class="t19" width="14" height="12" viewBox="0 0 14 12"><path d="M.5 4h2l3-3v10l-3-3h-2z" fill="none" stroke="#fff"/><path d="M8 3.500c1 1.500 1 3.500 0 5M10.500 2c2 2 2 6 0 8" fill="none" stroke="#fff"/></svg>
            <svg class="t24" width="13" height="15" viewBox="0 0 13 15"><path d="M1 14c3-2 3-5 5-8 1-2 3-5 5-5 2 1-1 5-3 7-1 2 2 2 3 0M4 8c2 1 4 1 6 0" fill="none" stroke="#fff" stroke-width="1.200"/></svg>
            <div class="clock"><span>17:25</span><span>21/07/2020</span></div>
            <svg class="notif" width="14" height="14" viewBox="0 0 14 14"><path d="M.5 1h13v9H8l-2 3v-3H.5z" fill="none" stroke="#fff"/></svg>
        </div>
    </footer>

    <script src="script.js"></script>
</body>
</html>
```

FILE: styles.css
```css
* {
    margin: 0;
    padding: 0;
    box-sizing: border-box;
}

html, body {
    width: 1280px;
    height: 720px;
    overflow: hidden;
}

body {
    display: flex;
    flex-direction: column;
    background: #f5f4f3;
    font-family: Roboto, "Noto Sans", sans-serif;
    font-size: 9.8px;
    color: #444a4c;
}

i { font-style: normal; }
svg { display: block; flex: none; }
.defs { position: absolute; }

/* Window title */
.titlebar {
    height: 19px;
    background: #fff;
    display: flex;
    align-items: center;
    padding-left: 1px;
    flex: none;
}

.title-text {
    margin-left: 3px;
    font-size: 9.600px;
    color: #222;
}

.win-buttons {
    margin-left: auto;
    display: flex;
    align-items: center;
    gap: 27px;
    padding-right: 15px;
}

/* Menu */
.menubar {
    height: 19px;
    flex: none;
    display: flex;
    align-items: center;
    gap: 13px;
    padding-left: 6px;
    border-bottom: 1px solid #dedcda;
    font-size: 9.500px;
    color: #4c4e50;
}

/* Toolbars */
.toolbar {
    display: flex;
    align-items: center;
    flex: none;
}

.commands { height: 40px; padding-left: 1px; }
.controls { height: 37px; padding-left: 3px; padding-top: 2px; }

.btn {
    width: 36px;
    height: 33px;
    display: flex;
    align-items: center;
    justify-content: center;
    flex: none;
    border-radius: 4px;
}

.btn.first { margin-right: 2px; }
.btn.narrow { width: 28px; }
.btn.on { background: #d4d2d0; }
.btn.faded { opacity: .6; }

.ico { width: 25px; height: 25px; }

.sep {
    width: 11px;
    height: 32px;
    flex: none;
    display: flex;
    justify-content: center;
}

.sep::after {
    content: "";
    width: 1px;
    background: #e2e0de;
}

.sep.wide { width: 12px; }
.sep.end { width: 13px; }

.caret {
    display: inline-block;
    width: 0;
    height: 0;
    border-left: 4px solid transparent;
    border-right: 4px solid transparent;
    border-top: 4px solid #333;
}

.glyph-t {
    font-family: "Liberation Serif", serif;
    font-weight: bold;
    font-size: 28px;
    line-height: 25px;
    color: #26292c;
}

.field-label {
    width: 16px;
    text-align: left;
    padding-left: 3px;
    color: #b4b4b4;
    font-family: "DejaVu Sans", sans-serif;
    font-size: 9px;
}

.controls .field-label + .coord + .field-label { width: 19px; padding-left: 6px; }

.coord {
    width: 100px;
    height: 33px;
    flex: none;
    border: 1px solid #e0dedc;
    border-radius: 4px;
    display: flex;
    align-items: center;
    color: #a8a8a8;
    font-family: "DejaVu Sans", sans-serif;
    font-size: 9px;
}

.coord span { flex: 1; padding-left: 2px; }

.coord i {
    width: 14px;
    height: 100%;
    display: flex;
    align-items: center;
    justify-content: center;
    border-left: 1px solid #e8e6e4;
    font-size: 12px;
    color: #c4c4c4;
}

.unit {
    width: 48px;
    height: 33px;
    margin-left: 4px;
    flex: none;
    border: 1px solid #dcdad8;
    border-radius: 4px;
    background: #efeeed;
    display: flex;
    align-items: center;
    justify-content: space-between;
    padding: 0 8px;
    color: #3a4a44;
}

/* Workspace */
.workspace {
    height: 518px;
    flex: none;
    display: flex;
}

.toolbox {
    width: 48px;
    flex: none;
    padding-top: 5px;
    display: flex;
    flex-direction: column;
    align-items: center;
}

.tool {
    width: 41px;
    height: 33.500px;
    flex: none;
    display: flex;
    align-items: center;
    justify-content: center;
    border-radius: 4px;
}

.tool.on { background: #dcdad8; }
.tool-sep { height: 5.500px; flex: none; width: 41px; border-top: 1px solid #e6e4e2; margin-top: 6px; }
.tool-sep.tall { height: 6px; margin-top: 4px; }
.tool.more { margin-top: auto; height: 30px; }

.glyph-a {
    font-family: "Liberation Sans", sans-serif;
    font-weight: bold;
    font-size: 25px;
    line-height: 25px;
    color: #26292c;
}

.text-cursor { width: 3px; height: 25px; background: #35c477; margin-left: 3px; }

.arrow-right {
    width: 0;
    height: 0;
    border-top: 4px solid transparent;
    border-bottom: 4px solid transparent;
    border-left: 4px solid #333;
}

.arrow-left {
    width: 0;
    height: 0;
    border-top: 4px solid transparent;
    border-bottom: 4px solid transparent;
    border-right: 4px solid #333;
}

/* Rulers and canvas */
.editor {
    width: 882px;
    flex: none;
    display: flex;
    flex-direction: column;
}

.ruler-row {
    height: 17px;
    flex: none;
    display: flex;
}

.ruler-corner {
    width: 14px;
    padding: 3px 0 0 2px;
    flex: none;
}

.ruler-top {
    width: 850px;
    flex: none;
    position: relative;
    display: flex;
    padding-left: 45px;
    border-bottom: 1px solid #333;
    font-size: 8px;
    color: #666;
    line-height: 10px;
    overflow: hidden;
    background-image:
        linear-gradient(90deg, #555 1px, transparent 1px),
        linear-gradient(90deg, #555 1px, transparent 1px),
        linear-gradient(90deg, #555 1px, transparent 1px);
    background-size: 5.62px 3px, 28.1px 6px, 56.2px 16px;
    background-position: 4.86px 100%, 16.1px 100%, 45px 100%;
    background-repeat: repeat-x;
}

.ruler-top span {
    width: 56.200px;
    flex: none;
    padding: 2px 0 0 2px;
}

.ruler-mark {
    position: absolute;
    left: 187px;
    bottom: 0;
    width: 0;
    height: 0;
    border-left: 4px solid transparent;
    border-right: 4px solid transparent;
    border-top: 4px solid #222;
}

.zoom-corner { width: 18px; padding: 2px 0 0 2px; }

.canvas-row {
    flex: 1;
    min-height: 0;
    display: flex;
}

.ruler-left {
    width: 14px;
    flex: none;
    padding-top: 37px;
    border-right: 1px solid #555;
    font-size: 7px;
    line-height: 6.500px;
    color: #666;
    background-image:
        linear-gradient(#555 1px, transparent 1px),
        linear-gradient(#555 1px, transparent 1px),
        linear-gradient(#555 1px, transparent 1px);
    background-size: 3px 5.62px, 6px 28.1px, 14px 56.2px;
    background-position: 100% 3px, 100% 9px, 100% 37px;
    background-repeat: repeat-y;
}

.ruler-left span {
    display: block;
    height: 56px;
    padding: 3px 0 0 4px;
}

.canvas {
    width: 850px;
    flex: none;
    position: relative;
    background: #fff;
    border-right: 1px solid #a9a9dc;
    overflow: hidden;
}

.drawing { position: absolute; left: 0; top: 0; }

.vscroll {
    width: 18px;
    flex: none;
    background: #cfcfcf;
    padding: 186px 0 0 7px;
}

.vthumb {
    display: block;
    width: 4px;
    height: 82px;
    border-radius: 2px;
    background: #8a8a8a;
}

.hscroll-row {
    height: 14px;
    flex: none;
    display: flex;
    padding-left: 14px;
}

.hscroll {
    width: 850px;
    background: #cfcfcf;
    padding: 6px 0 0 51px;
}

.hthumb {
    display: block;
    width: 372px;
    height: 4px;
    border-radius: 2px;
    background: #8a8a8a;
}

.cms-corner {
    width: 18px;
    background: #cfcfcf;
    padding: 1px 0 0 3px;
}

/* Dock */
.dock {
    width: 308px;
    flex: none;
    margin-top: 3px;
    background: #fff;
    display: flex;
    flex-direction: column;
    overflow: hidden;
}

.dock-head {
    height: 27px;
    flex: none;
    display: flex;
    align-items: center;
}

.dock-icon { width: 25px; height: 25px; margin-top: 2px; }

.dock-title { color: #444a4c; }

.mini { margin-top: -5px; }
.first-mini { margin-left: auto; margin-right: 18px; }
.mini + .mini { margin-right: 10px; }

.fs-panel {
    height: 295px;
    flex: none;
    margin: 0 3px 0 2px;
    border: 1px solid #d5d5d5;
    padding: 2px 1px 0;
    display: flex;
    flex-direction: column;
}

.fs-tabs {
    height: 30px;
    flex: none;
    display: flex;
    background: #dedad8;
    padding-left: 6px;
}

.fs-tab {
    display: flex;
    align-items: center;
    gap: 3px;
    font-weight: 700;
    color: #666;
    padding: 2px 9px 0;
    border-bottom: 2px solid transparent;
}

.tab-fill { width: 63px; border-bottom-color: #cfccca; }
.tab-stroke { width: 72px; border-bottom-color: #2a78d4; color: #444; }
.tab-style { color: #a4a2a2; padding-left: 15px; }

.sq-solid { width: 12px; height: 12px; flex: none; background: #666; }
.sq-line { width: 13px; height: 13px; flex: none; border: 1px solid #444; }

.paint-modes {
    height: 26px;
    flex: none;
    margin-top: 8px;
    padding-left: 5px;
    display: flex;
    align-items: center;
}

.mode {
    width: 29px;
    height: 26px;
    flex: none;
    display: flex;
    align-items: center;
    justify-content: center;
    font-size: 14px;
    font-weight: bold;
    color: #333;
    border-radius: 3px;
}

.mode.on { background: #d4d2d0; }
.mode-help { color: #222; font-size: 14px; }

.pm { display: block; width: 13px; height: 13px; }
.pm-flat { background: #cc0000; }
.pm-linear { background: linear-gradient(90deg, #c80000, #f6c8c8); }
.pm-radial { background: radial-gradient(circle, #d4001a 25%, #fbd8d8 70%, #fff 100%); border-radius: 50%; }
.pm-pattern {
    background: conic-gradient(#555 25%, #eee 0 50%, #555 0 75%, #eee 0);
    outline: 1px solid #555;
    width: 11px;
    height: 11px;
}
.pm-swatch { background: #b80f0f; border: 2px solid #555; border-radius: 2px; }

.aplat {
    height: 14px;
    flex: none;
    margin-top: 6px;
    padding-left: 5px;
    font-weight: 700;
    color: #333;
    line-height: 14px;
}

.color-tabs {
    height: 28px;
    flex: none;
    margin-top: 2px;
    padding: 0 6px 0 5px;
    display: flex;
    gap: 1.800px;
}

.color-tabs span {
    flex: 1;
    border: 1px solid #dcdad8;
    border-radius: 4px;
    background: #f2f1f0;
    display: flex;
    align-items: center;
    justify-content: center;
    color: #524a54;
}

.color-tabs .on { background: #d4d0ce; }

.sliders {
    margin-top: 2px;
    display: grid;
    grid-template-columns: 29px 197px 54px;
    grid-auto-rows: 26.700px;
    row-gap: 2px;
    flex: none;
}

.sliders label {
    padding-left: 11px;
    align-self: center;
    color: #6c7074;
    font-family: "DejaVu Sans", sans-serif;
    font-size: 8.500px;
}

.bar { border-radius: 2px; }
.bar-r { background: linear-gradient(90deg, #000, #f00); }
.bar-g { background: linear-gradient(90deg, #000, #0f0); }
.bar-b { background: linear-gradient(90deg, #000, #00f); }
.bar-a {
    background:
        linear-gradient(90deg, rgba(0, 0, 0, 0) 0, #000 100%),
        repeating-conic-gradient(#666 0 25%, #999 0 50%) 0 0 / 13px 13px;
}

.spin {
    border: 1px solid #e0dedc;
    border-radius: 4px;
    background: #fff;
    display: flex;
    align-items: center;
    margin-left: 6px;
    width: 54px;
    color: #5a5040;
    height: 26px;
}

.spin b {
    flex: 1;
    font-weight: normal;
    padding-left: 4px;
    font-size: 10px;
}

.spin i {
    width: 14px;
    height: 100%;
    display: flex;
    align-items: center;
    justify-content: center;
    font-size: 15px;
    color: #222;
    border-left: 1px solid #eeecea;
}

.spin i.dim, i.dim { color: #d4d4d4; }

.rgba-row {
    height: 28px;
    flex: none;
    margin-top: 32px;
    padding: 0 6px;
    display: flex;
    align-items: center;
    gap: 2px;
}

.picker { margin-left: 10px; }
.rgba-label { margin-left: auto; margin-right: 2px; color: #5a5060; }

.rgba-input {
    width: 53px;
    height: 28px;
    border: 1px solid #dcdad8;
    border-radius: 4px;
    display: flex;
    align-items: center;
    justify-content: center;
    color: #1e5c96;
    font-size: 9.500px;
}

.blend-row {
    height: 40px;
    flex: none;
    margin: 0 5px 0 2px;
    display: flex;
    align-items: center;
    justify-content: flex-end;
    gap: 8px;
    padding: 6px 7px 7px 0;
    border-bottom: 1px solid #e8e8e8;
    color: #5a4a56;
}

.select {
    width: 126px;
    height: 27px;
    flex: none;
    border: 1px solid #d6d4d2;
    border-radius: 4px;
    background: #f2f1f0;
    display: flex;
    align-items: center;
    justify-content: space-between;
    padding: 0 9px;
}

.scale-row {
    flex: none;
    display: flex;
    align-items: center;
    margin-left: 2px;
}

.flou { height: 26px; margin-top: 7px; }
.opac { height: 25px; }

.scale {
    width: 249px;
    height: 100%;
    flex: none;
    display: flex;
    align-items: center;
    padding-left: 4px;
}

.flou .scale { background: #dedad8; border-left: 1px solid #2b6ea8; border-bottom: 1px solid #2b7bd8; color: #444; }
.opac .scale { background: #2b7bd8; color: #e8f0f8; }

.scale-row b {
    width: 26px;
    font-weight: normal;
    padding-left: 2px;
    font-size: 9.500px;
    color: #5a5040;
    flex: none;
    white-space: nowrap;
}

.scale-row i {
    width: 14px;
    flex: none;
    text-align: center;
    font-size: 15px;
    color: #222;
}

.scale-row i.dim { color: #d4d4d4; }

.dock-items {
    flex: 1;
    margin-top: 4px;
    background: #f5f4f3;
    border-top: 1px solid #e4e2e0;
    border-radius: 4px 4px 0 0;
    overflow: hidden;
}

.dock-item {
    height: 33.500px;
    display: flex;
    align-items: center;
    padding: 0 10px 0 6px;
    gap: 3px;
    color: #5a5558;
}

.dock-item.on { background: #d4d0ce; }
.dock-item.last { align-items: flex-start; padding-top: 6px; }

.item-icon { width: 26px; height: 26px; }
.chev { width: 9px; height: 6px; margin-left: auto; }
.last .chev { margin-top: 8px; }
.last span { padding-top: 5px; }

/* Snap bar */
.snapbar {
    width: 42px;
    flex: none;
    padding: 8px 0 0 1px;
    display: flex;
    flex-direction: column;
    align-items: center;
}

.snap {
    width: 34px;
    height: 33px;
    flex: none;
    display: flex;
    align-items: center;
    justify-content: center;
    border-radius: 4px;
}

.snap svg { width: 25px; height: 25px; }
.snap.main { height: 30px; }
.snap.group { height: 34.250px; }
.snap.on { background: #dcdad8; }
.snap.faint svg { opacity: .42; }
.snap.after-on { margin-top: 3px; height: 34px; }
.snap.wider { margin-top: 4px; }
.snap.tight { height: 28px; }

.snap-sep {
    width: 28px;
    flex: none;
    border-top: 1px solid #dedcda;
}

.snap-sep.first { margin-top: 7px; height: 6.250px; }
.snap-sep.second { margin-top: 6px; height: 7px; }
.snap-sep.third { margin-top: 9px; height: 6px; }

.snap-more { margin-top: 14px; }

/* Palette */
.palette-row {
    height: 17px;
    flex: none;
    display: flex;
}

.no-color { background: #fff; }

.palette {
    width: 1236px;
    flex: none;
    display: flex;
    background: #cfcfcf;
}

.swatch { flex: 1; height: 100%; }

.palette-end {
    flex: 1;
    background: #fff;
    display: flex;
    align-items: center;
    justify-content: center;
}

.palette-scroll {
    height: 11px;
    flex: none;
    background: #cfcfcf;
    padding: 4px 0 0 3px;
    margin-right: 29px;
}

.palette-scroll span {
    display: block;
    width: 288px;
    height: 5px;
    border-radius: 3px;
    background: #888;
}

/* Status bar */
.statusbar {
    height: 27px;
    flex: none;
    display: flex;
    align-items: center;
    padding-left: 2px;
    font-size: 10px;
    color: #4a4c4e;
}

.style-labels, .style-values {
    display: flex;
    flex-direction: column;
    height: 100%;
    justify-content: space-between;
    padding-top: 1px;
}

.style-labels { width: 43px; flex: none; line-height: 13px; }
.style-values { width: 29px; flex: none; line-height: 12px; }
.style-values em { font-size: 9.500px; }
.stroke-swatch { display: block; width: 25px; height: 13px; background: #000; }

.stroke-width {
    width: 30px;
    flex: none;
    font-family: "DejaVu Sans", sans-serif;
    font-size: 9px;
    padding-top: 8px;
}

.o-label { width: 14px; flex: none; font-family: "DejaVu Sans", sans-serif; font-size: 9px; }

.spin.small { width: 53px; height: 26px; margin-left: 0; flex: none; color: #3a4a5a; }
.st-sep { width: 1px; height: 26px; background: #e6e4e2; margin-left: 3px; flex: none; }
.eye { margin-left: 7px; }
.open-lock { margin-left: 17px; }

.layer {
    width: 68px;
    height: 26px;
    flex: none;
    margin-left: 8px;
    border: 1px solid #e0dedc;
    border-radius: 4px;
    background: #f0efee;
    display: flex;
    align-items: center;
    justify-content: center;
    gap: 4px;
    font-size: 8.500px;
    font-weight: 700;
    color: #333;
}

.coords {
    margin-left: auto;
    width: 56px;
    flex: none;
    display: grid;
    grid-template-columns: 16px 40px;
    font-family: "DejaVu Sans", sans-serif;
    font-size: 9px;
    line-height: 13px;
    color: #5a5c5e;
}

.cv { text-align: right; }

.z-label, .r-label {
    font-family: "DejaVu Sans", sans-serif;
    font-size: 9px;
    color: #5a5c5e;
    flex: none;
}

.z-label { margin-left: 9px; width: 19px; }
.r-label { margin-left: 9px; width: 19px; color: #6a4a66; }

.spin.zoomfield, .spin.rotfield { width: 78px; margin-left: 0; flex: none; }
.spin.zoomfield b, .spin.rotfield b { text-align: center; font-family: "DejaVu Sans", sans-serif; font-size: 9px; color: #4a5a6a; }
.spin.zoomfield i, .spin.rotfield i { width: 17px; }
.spin.rotfield { margin-right: 16px; }

/* Taskbar */
.taskbar {
    height: 32px;
    flex: none;
    display: flex;
    align-items: center;
    background: #5c9c18;
    color: #fff;
}

.start {
    width: 39px;
    height: 100%;
    flex: none;
    display: flex;
    align-items: center;
    justify-content: center;
}

.search {
    width: 274px;
    height: 100%;
    flex: none;
    background: #f3f3f3;
    display: flex;
    align-items: center;
    gap: 8px;
    padding-left: 9px;
    font-size: 11.800px;
    color: #3a4a56;
}

.task {
    width: 39.300px;
    height: 100%;
    flex: none;
    display: flex;
    align-items: center;
    justify-content: center;
}

.task.current {
    background: #68b01e;
    border-bottom: 2px solid #d4e8b8;
}

.tray {
    margin-left: auto;
    height: 100%;
    display: flex;
    align-items: center;
    padding-right: 10px;
}

.tray > svg { margin: 0 auto; }
.t19 { width: 19px; padding: 0 2.500px; }
.t20 { width: 20px; padding: 0 3px; }
.t24 { width: 24px; padding: 0 5px; }

.help {
    width: 22px;
    height: 22px;
    margin: 0 2px 0 7px;
    border-radius: 50%;
    background: #1583d4;
    border: 2px solid #fff;
    text-align: center;
    font-size: 15px;
    line-height: 18px;
    font-weight: bold;
}

.clock {
    width: 58px;
    display: flex;
    flex-direction: column;
    align-items: center;
    font-size: 9.500px;
    line-height: 14px;
    color: #eef4e4;
}

.notif { margin: 0 9px !important; }
```

FILE: script.js
```js
// Swatches of the default palette, left to right
const colors = [
    "#b6c3c8", "#9aa9b2", "#a0adb8", "#9ba8b3", "#97a4a4", "#62686a", "#6c7375", "#e5717a", "#56566a",
    "#6e7080", "#5f6370", "#fb8c9b", "#c9582f", "#efddb8", "#f7dd55", "#f6a72f", "#c37f28", "#fbc370",
    "#77738f", "#6ca6c7", "#bcc8dd", "#9b99c0", "#8f62a3", "#3a3260", "#5b2270", "#3c2e63", "#7a3040",
    "#c02538", "#8b2a38", "#b23a45", "#60646a", "#333a45", "#1d5c9c", "#2a3a50", "#7accc5", "#8fc4a8",
    "#93a56e", "#7c9a2e", "#3a8236", "#0a8c4a", "#367c7e", "#f0b9a7", "#6a4a4a", "#c29b88", "#8c5a42",
    "#7c4a38", "#52302c", "#b0a49c", "#f5ecca", "#8c8474", "#73674f", "#66624f", "#4c4c3e", "#f3e4b0",
    "#667a70", "#3e4e40", "#d9a868", "#5a8ab0", "#b08048", "#bb9a66", "#8cbfe2", "#78aedc", "#2e4a90",
    "#0a4a50", "#f0562a", "#5c3468", "#c0305a", "#d0c0b0", "#fcc24c", "#c4a478", "#0a8c84", "#d2d4d4",
    "#bcc0c0", "#6c6e6c", "#155050", "#9cc8c8", "#0aa4b8", "#0a8ca8", "#44a030", "#6cb884", "#0a6444",
    "#1c4a40"
];

const palette = document.getElementById("palette");

colors.forEach(color => {
    let swatch = document.createElement("span");
    swatch.className = "swatch";
    swatch.style.background = color;
    palette.appendChild(swatch);
});
```
